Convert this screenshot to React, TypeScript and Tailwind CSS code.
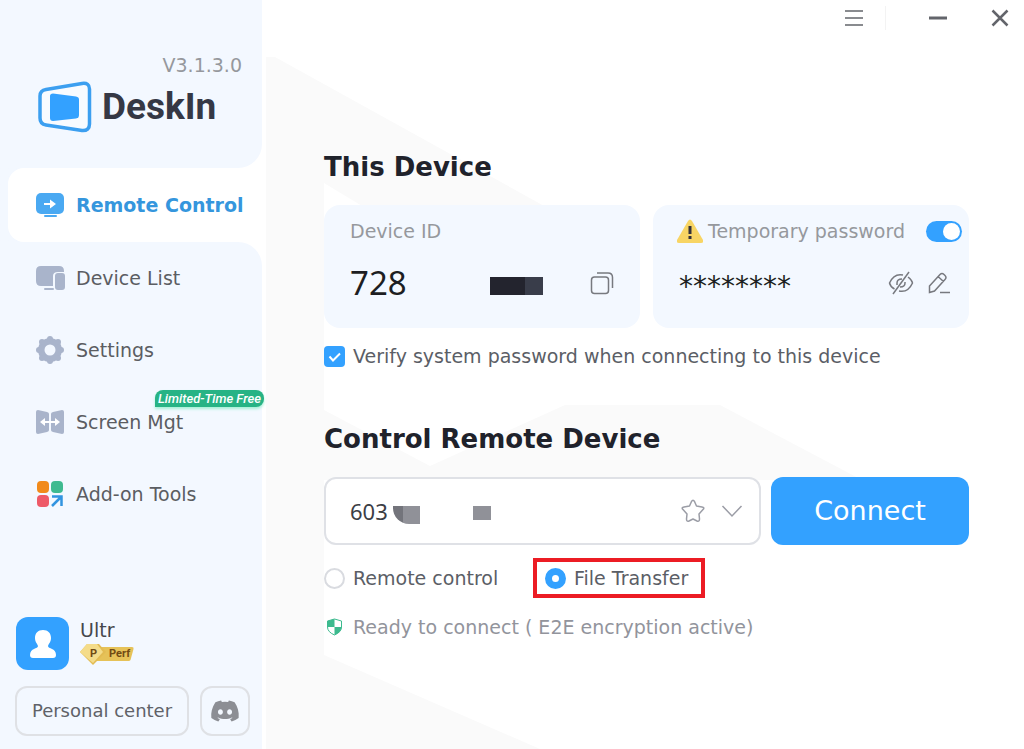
import { useState } from "react";
import type { ReactNode } from "react";
import { FaDiscord } from "react-icons/fa";

interface NavItemProps {
  icon: ReactNode;
  label: string;
  badge?: string;
}

const Logo = () => (
  <svg width="54" height="52" viewBox="0 0 54 52" fill="none">
    <path
      d="M8 8.5 L44 2.5 Q51.5 1.5 51.5 8 V43 Q51.5 50 44 49.5 L8 44 Q2 43 2 37 V15 Q2 9.500 8 8.500Z"
      fill="#f8fbff"
      stroke="#3c9ff0"
      strokeWidth="3.500"
    />
    <path
      d="M15 12.500 L38 15.500 Q41 16 41 18.500 V34 Q41 37 38 37.500 L15 40 Q12 40 12 37 V15 Q12 12.500 15 12.500Z"
      fill="#33a1ff"
    />
  </svg>
);

const RemoteIcon = () => (
  <svg width="30" height="28" viewBox="0 0 30 28">
    <rect x="1" y="2" width="28" height="21" rx="5" fill="#4aa9f2" />
    <rect x="9" y="24" width="13" height="2" rx="1" fill="#4aa9f2" />
    <path d="M9 12h6V8.500l6 4.500-6 4.500V14H9z" fill="#fff" />
  </svg>
);

const DevicesIcon = () => (
  <svg width="30" height="28" viewBox="0 0 30 28" fill="#a9b4cb">
    <path d="M6 2h18q5 0 5 5v1h-6q-5 0-5 4v10H6q-5 0-5-5V7q0-5 5-5z" />
    <rect x="20" y="9" width="10" height="17" rx="3" />
    <rect x="9" y="24" width="10" height="2" rx="1" />
  </svg>
);

const GearIcon = () => (
  <svg width="30" height="30" viewBox="0 0 30 30" fill="#a9b4cb">
    <circle cx="15" cy="15" r="12" />
    <circle cx="15" cy="4" r="3" />
    <circle cx="15" cy="26" r="3" />
    <circle cx="4" cy="15" r="3" />
    <circle cx="26" cy="15" r="3" />
    <circle cx="7" cy="7" r="3" />
    <circle cx="23" cy="7" r="3" />
    <circle cx="7" cy="23" r="3" />
    <circle cx="23" cy="23" r="3" />
    <circle cx="15" cy="15" r="5.500" fill="#f3f8ff" />
  </svg>
);

const ScreenIcon = () => (
  <svg width="30" height="26" viewBox="0 0 30 26">
    <path d="M3 1l9 2q2 .5 2 2v16q0 1.500-2 2l-9 2q-2 0-2-2V3q0-2 2-2z" fill="#a9b4cb" />
    <path d="M27 1l-9 2q-2 .5-2 2v16q0 1.500 2 2l9 2q2 0 2-2V3q0-2-2-2z" fill="#a9b4cb" />
    <path d="M7 13h16" stroke="#fff" strokeWidth="2" />
    <path d="M5 13l5-4v8zM25 13l-5-4v8z" fill="#fff" />
  </svg>
);

const ToolsIcon = () => (
  <svg width="30" height="28" viewBox="0 0 30 28">
    <rect x="2" y="1" width="12" height="12" rx="4" fill="#f18a1b" />
    <rect x="16" y="1" width="12" height="12" rx="4" fill="#3fba90" />
    <rect x="2" y="15" width="12" height="12" rx="4" fill="#ee5a68" />
    <path d="M17 16.500h9.500V26M26 17l-9 9" fill="none" stroke="#3294e0" strokeWidth="2.500" />
  </svg>
);

const PerfBadge = () => (
  <span className="relative flex h-6 w-14 items-center">
    <svg width="56" height="24" viewBox="0 0 56 24" className="absolute">
      <path d="M14 5h38q2 0 1.500 2l-3 11q-.5 1-2 1H14z" fill="#e6c258" />
      <path d="M7 2h12l7 8-13 13L0 10z" fill="#e2bb52" />
      <path d="M7 2h10l6 8-10 11L0 10z" fill="#f4dc8a" />
    </svg>
    <span className="relative flex gap-3 pl-[10px] font-['Roboto'] text-[11px] font-bold leading-4 text-[#704a14]">
      <span>P</span>
      <span>Perf</span>
    </span>
  </span>
);

// faint hexagon outlines behind the content
const BackgroundPattern = () => (
  <svg
    className="absolute inset-0 h-full w-full"
    viewBox="0 0 762 749"
    preserveAspectRatio="xMinYMin slice"
    fill="#fafafa"
  >
    <path d="M4 57H13L340 238L110 212L62 183V410L168 466L303 405H458L600 480H62V655L278 749H4Z" />
  </svg>
);

const NavItem = ({ icon, label, badge }: NavItemProps) => (
  <a href="#" className="relative flex h-[72px] items-center gap-[11px] pl-[35px] text-[#5b5d62]">
    {icon}
    <span>{label}</span>
    {badge && (
      <span className="absolute -right-0.5 top-1 rounded-t-lg rounded-br-lg bg-[#27b385] px-[3px] font-['Roboto'] text-[13px] font-medium italic leading-[17px] text-white shadow-[0_2px_3px_#a5f0d6]">
        {badge}
      </span>
    )}
  </a>
);

const Sidebar = () => (
  <aside className="relative z-10 flex w-[262px] shrink-0 flex-col bg-white">
    <div className="h-[168px] rounded-br-3xl bg-[#f3f8ff] pt-[53px]">
      <p className="pr-5 text-right leading-6 text-[#96989d]">V3.1.3.0</p>
      <div className="mt-1 flex items-center gap-2.5 pl-[38px]">
        <Logo />
        <span className="font-['Roboto'] text-[37px] font-bold leading-[52px] text-[#353845]">
          DeskIn
        </span>
      </div>
    </div>

    <div className="bg-linear-to-r from-[#f3f8ff] from-50% to-white to-50% pl-2">
      <a
        href="#"
        className="flex h-[74px] items-center gap-[11px] rounded-l-2xl bg-white pl-[27px] font-bold text-[#3596dd]"
      >
        <RemoteIcon />
        <span>Remote Control</span>
      </a>
    </div>

    <div className="flex grow flex-col rounded-tr-3xl bg-[#f3f8ff]">
      <nav>
        <NavItem icon={<DevicesIcon />} label="Device List" />
        <NavItem icon={<GearIcon />} label="Settings" />
        <NavItem icon={<ScreenIcon />} label="Screen Mgt" badge="Limited-Time Free" />
        <NavItem icon={<ToolsIcon />} label="Add-on Tools" />
      </nav>

      <div className="mt-auto flex items-center gap-[11px] px-4">
        <span className="flex size-[53px] items-center justify-center rounded-xl bg-[#33a1ff]">
          <svg width="28" height="30" viewBox="0 0 28 30" fill="#fff">
            <path d="M14 1c5 0 8 3 8 8 0 4-2 5-3 8 0 3 8 2 8 9 0 2-1 3-3 3H4c-2 0-3-1-3-3 0-7 8-6 8-9-1-3-3-4-3-8 0-5 3-8 8-8z" />
          </svg>
        </span>
        <div className="pb-1">
          <p className="leading-6 text-[#45474d]">Ultr</p>
          <PerfBadge />
        </div>
      </div>
      <div className="flex gap-[11px] pb-[13px] pl-[15px] pr-3 pt-4">
        <button className="h-[50px] grow rounded-xl border-2 border-[#dfe1e5] text-lg text-[#606268]">
          Personal center
        </button>
        <button
          aria-label="Discord"
          className="flex size-[50px] items-center justify-center rounded-xl border-2 border-[#dfe1e5] text-[#8c8e94]"
        >
          <FaDiscord size={30} />
        </button>
      </div>
    </div>
  </aside>
);

const WindowControls = () => (
  <div className="flex h-9 items-center justify-end pr-3.5 text-[#63656b]">
    <button aria-label="Menu" className="mr-[21px]">
      <svg width="20" height="20" viewBox="0 0 20 20" stroke="currentColor" strokeWidth="1.500">
        <path d="M1 3h18M1 10h18M1 17h18" />
      </svg>
    </button>
    <span className="mr-[42px] h-6 w-px bg-[#f3f3f3]" />
    <button aria-label="Minimize" className="mr-[42px]">
      <svg width="20" height="20" viewBox="0 0 20 20" stroke="currentColor" strokeWidth="3">
        <path d="M1 10h18" />
      </svg>
    </button>
    <button aria-label="Close">
      <svg width="20" height="20" viewBox="0 0 20 20" stroke="currentColor" strokeWidth="2.500">
        <path d="M2.500 2.500l15 15M17.500 2.500l-15 15" />
      </svg>
    </button>
  </div>
);

const DeviceIdCard = () => (
  <div className="flex h-[123px] flex-col rounded-2xl bg-[#f3f8ff] px-[26px] pt-3.5">
    <span className="leading-6 text-[#96989d]">Device ID</span>
    <div className="mt-[18px] flex h-11 items-center">
      <span className="font-['Noto_Sans'] text-[33px] leading-10 text-[#1d1e22]">728</span>
      <span className="ml-auto mt-1.5 flex h-[18px]">
        <span className="w-[35px] bg-[#23242e]" />
        <span className="w-[18px] bg-[#393d4a]" />
      </span>
      <button aria-label="Copy" className="ml-[47px]">
        <svg width="24" height="24" viewBox="0 0 24 24" fill="none" stroke="#77797f" strokeWidth="1.500">
          <rect x="1.500" y="6" width="17" height="16.500" rx="3" />
          <path d="M7 2h11q4.500 0 4.500 4.500V17" />
        </svg>
      </button>
    </div>
  </div>
);

const PasswordCard = () => {
  const [enabled, setEnabled] = useState(true);

  return (
    <div className="flex h-[123px] flex-col rounded-2xl bg-[#f3f8ff] pl-6 pr-[7px] pt-3.5">
      <div className="flex h-6 items-center">
        <svg width="26" height="24" viewBox="0 0 26 24" className="mr-[5px]">
          <path d="M11 2q2-3 4 0l11 19q1 3-2 3H2q-3 0-2-3z" fill="#f8d564" />
          <path d="M13 7v8M13 17v3" stroke="#34323a" strokeWidth="3" />
        </svg>
        <label htmlFor="temp-password" className="whitespace-nowrap text-[#96989d]">
          Temporary password
        </label>
        <span className="relative ml-auto h-[21px] w-9">
          <input
            id="temp-password"
            type="checkbox"
            checked={enabled}
            onChange={() => setEnabled(!enabled)}
            className="peer block h-[21px] w-9 appearance-none rounded-full bg-[#c9ccd2] checked:bg-[#33a1ff]"
          />
          <span className="pointer-events-none absolute left-0.5 top-0.5 size-[17px] rounded-full bg-white peer-checked:left-[17px]" />
        </span>
      </div>
      <div className="mt-[18px] flex h-11 items-center">
        <span className="ml-0.5 pt-2 font-['DejaVu_Sans'] text-[28px] leading-10 text-[#1d1e22]">
          ********
        </span>
        <button aria-label="Show password" className="ml-auto mr-3.5">
          <svg width="26" height="24" viewBox="0 0 26 24" fill="none" stroke="#77797f" strokeWidth="1.500">
            <path d="M15 4Q6 2 1.500 12q1 4 5 6M20 6q4 3 4.500 6Q20 22 11 20" />
            <path d="M14 8q-5 0-5 4v2M12 16q5 0 5-4v-1" />
            <path d="M21 1L5 23" />
          </svg>
        </button>
        <button aria-label="Edit password" className="mr-3">
          <svg width="22" height="22" viewBox="0 0 22 22" fill="none" stroke="#77797f" strokeWidth="1.500">
            <path d="M1.500 14L12 2.500q2-2 4 0l1 1q2 2 0 4L6.500 19l-5 1.500zM10 4.500l5.500 5M12 20.500h10" />
          </svg>
        </button>
      </div>
    </div>
  );
};

const RemoteForm = () => {
  const [deviceId, setDeviceId] = useState("603");
  const [mode, setMode] = useState("file");

  return (
    <form onSubmit={(e) => e.preventDefault()}>
      <div className="flex gap-2.5">
        <div className="relative flex h-[68px] grow items-center rounded-xl border-2 border-[#dfe1e6] bg-white pl-6 pr-4">
          <input
            aria-label="Device ID"
            value={deviceId}
            onChange={(e) => setDeviceId(e.target.value)}
            className="min-w-0 grow font-['Noto_Sans'] text-[22px] leading-8 text-[#3c3e45] outline-none"
          />
          <span className="absolute left-[67px] top-[27px] flex h-[18px] overflow-hidden rounded-bl-2xl">
            <span className="w-[10px] bg-[#73747b]" />
            <span className="w-[17px] bg-[#909198]" />
          </span>
          <span className="absolute left-[147px] top-[27px] h-[14px] w-[18px] bg-[#909198]" />
          <button type="button" aria-label="Favorite" className="mr-4">
            <svg width="24" height="24" viewBox="0 0 24 24" fill="none" stroke="#9b9da6" strokeWidth="1.500">
              <path
                strokeLinejoin="round"
                d="M10.500 2.500q1.500-2.500 3 0l2 4.500 5.500 1q3 .5 1 2.500l-4 4.500.5 5q0 3-2.500 2L12 20l-4 2q-2.500 1-2.500-2l.5-5-4-4.500Q0 8.500 3 8l5.500-1z"
              />
            </svg>
          </button>
          <button type="button" aria-label="Recent devices">
            <svg width="22" height="14" viewBox="0 0 22 14" fill="none" stroke="#9b9da6" strokeWidth="1.500">
              <path d="M1.500 2L11 12l9.500-10" />
            </svg>
          </button>
        </div>
        <button className="h-[68px] w-[198px] rounded-xl bg-[#33a1ff] text-[27px] text-white">
          Connect
        </button>
      </div>

      <div className="mt-3 flex h-[42px] items-center">
        <label className="flex w-[209px] items-center gap-2">
          <input
            type="radio"
            name="mode"
            checked={mode === "remote"}
            onChange={() => setMode("remote")}
            className="size-[21px] appearance-none rounded-full border-2 border-[#d9dbe0] bg-white checked:border-[7px] checked:border-[#33a1ff]"
          />
          Remote control
        </label>
        <label className="flex h-10 w-[172px] items-center gap-2 whitespace-nowrap border-4 border-[#ec1c24] bg-white pl-2">
          <input
            type="radio"
            name="mode"
            checked={mode === "file"}
            onChange={() => setMode("file")}
            className="size-[21px] appearance-none rounded-full border-2 border-[#d9dbe0] bg-white checked:border-[7px] checked:border-[#33a1ff]"
          />
          File Transfer
        </label>
      </div>
    </form>
  );
};

export default function App() {
  const [verify, setVerify] = useState(true);

  return (
    <div className="flex min-h-screen bg-white font-['DejaVu_Sans',sans-serif] text-[19px] leading-7 text-[#5b5e66]">
      <Sidebar />
      <main className="relative grow">
        <BackgroundPattern />
        <div className="relative">
          <WindowControls />
          <div className="pl-[62px] pr-[55px] pt-[113px]">
            <h2 className="text-[26px] font-bold leading-9 text-[#20222b]">This Device</h2>
            <div className="mt-5 grid grid-cols-2 gap-[13px]">
              <DeviceIdCard />
              <PasswordCard />
            </div>
            <label className="mt-3.5 flex items-center gap-2 whitespace-nowrap">
              <span className="relative size-[21px]">
                <input
                  type="checkbox"
                  checked={verify}
                  onChange={() => setVerify(!verify)}
                  className="block size-[21px] appearance-none rounded-sm border-2 border-[#d9dbe0] checked:border-0 checked:bg-[#33a1ff]"
                />
                {verify && (
                  <svg
                    className="pointer-events-none absolute inset-0"
                    width="21"
                    height="21"
                    viewBox="0 0 21 21"
                    fill="none"
                    stroke="#fff"
                    strokeWidth="2"
                  >
                    <path d="M5.500 10.500l3.500 4 7-7" />
                  </svg>
                )}
              </span>
              Verify system password when connecting to this device
            </label>

            <h2 className="mt-[51px] text-[26px] font-bold leading-9 text-[#20222b]">
              Control Remote Device
            </h2>
            <div className="mt-5">
              <RemoteForm />
            </div>

            <p className="mt-3.5 flex items-center gap-2 text-[#92949c]">
              <svg width="21" height="18" viewBox="0 0 21 18">
                <path d="M10.500 1l7 2v6q0 5-7 8-7-3-7-8V3z" fill="#fff" stroke="#3cba8e" />
                <path d="M10.500 1v8h-7V3zM10.500 9h7q0 5-7 8z" fill="#3cba8e" />
              </svg>
              Ready to connect ( E2E encryption active)
            </p>
          </div>
        </div>
      </main>
    </div>
  );
}
